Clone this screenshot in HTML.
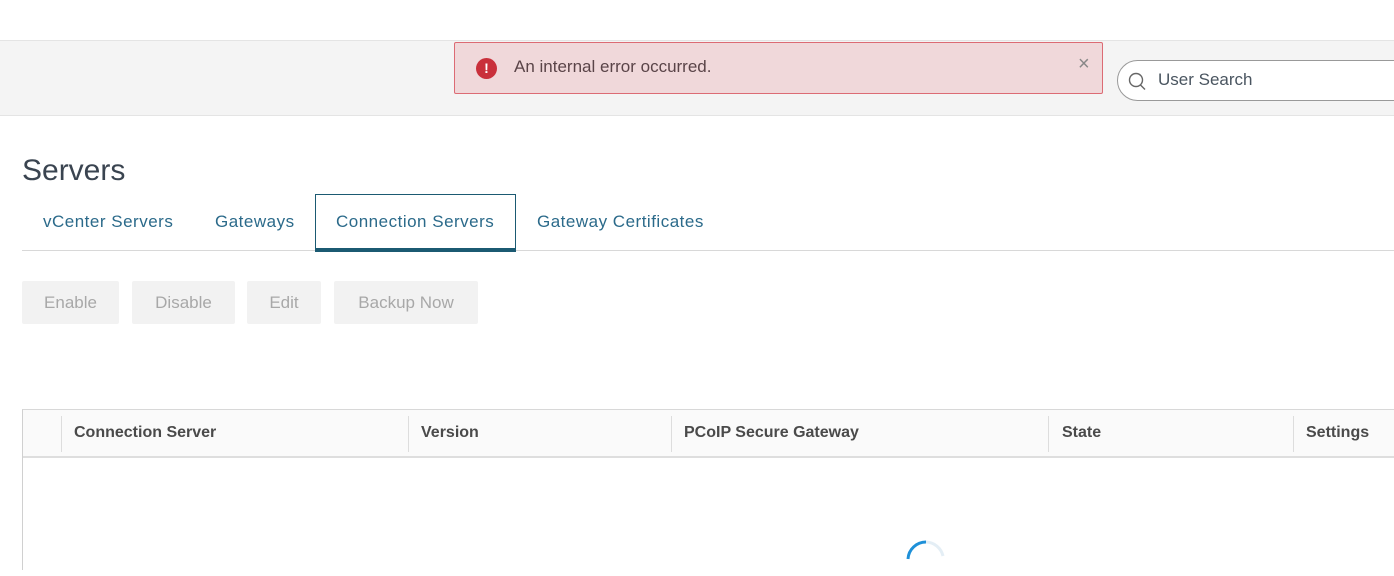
<!DOCTYPE html>
<html><head><meta charset="utf-8"><style>
*{margin:0;padding:0;box-sizing:border-box}
body{width:1394px;height:570px;overflow:hidden;background:#fff;font-family:"Liberation Sans",sans-serif;position:relative}
.a{position:absolute}
.tab{font-size:17px;color:#2b6a8a;letter-spacing:0.5px}
.th{font-size:16px;color:#4a4a4a;font-weight:bold;letter-spacing:0px}
</style></head><body>
<div class="a" style="left:0;top:40px;width:1394px;height:76px;background:#f4f4f4;border-top:1px solid #e4e4e4;border-bottom:1px solid #e4e4e4"></div>
<div class="a" style="left:454px;top:42px;width:649px;height:52px;background:#f0d8da;border:1px solid #dc6b74;border-radius:2px"></div>
<div class="a" style="left:476px;top:58px;width:21px;height:21px;border-radius:50%;background:#c9303b;color:#fff;font-size:14px;font-weight:bold;text-align:center;line-height:21px">!</div>
<div class="a" style="left:514px;top:57px;font-size:17px;color:#5a4448">An internal error occurred.</div>
<div class="a" style="left:1078px;top:53px;font-size:20px;color:#888">×</div>
<div class="a" style="left:1117px;top:60px;width:300px;height:41px;border:1px solid #999;border-radius:21px;background:#fff"></div>
<svg class="a" style="left:1127px;top:70px" width="22" height="22" viewBox="0 0 22 22"><circle cx="9" cy="10" r="6.5" fill="none" stroke="#666" stroke-width="1.4"/><line x1="13.5" y1="15" x2="18" y2="19.5" stroke="#666" stroke-width="1.4"/></svg>
<div class="a" style="left:1158px;top:70px;font-size:17px;color:#4a5560">User Search</div>

<div class="a" style="left:22px;top:154px;font-size:30px;color:#3a4450">Servers</div>

<div class="a" style="left:22px;top:250px;width:1372px;height:1px;background:#d8d8d8"></div>
<div class="a" style="left:315px;top:194px;width:201px;height:58px;border:1px solid #1b5a72;border-bottom:4px solid #1b5a72"></div>
<div class="a tab" style="left:43px;top:212px">vCenter Servers</div>
<div class="a tab" style="left:215px;top:212px">Gateways</div>
<div class="a tab" style="left:336px;top:212px">Connection Servers</div>
<div class="a tab" style="left:537px;top:212px">Gateway Certificates</div>

<div class="a" style="left:22px;top:281px;width:97px;height:43px;background:#f2f2f2;border-radius:2px;color:#a8a8a8;font-size:17px;text-align:center;line-height:43px">Enable</div>
<div class="a" style="left:132px;top:281px;width:103px;height:43px;background:#f2f2f2;border-radius:2px;color:#a8a8a8;font-size:17px;text-align:center;line-height:43px">Disable</div>
<div class="a" style="left:247px;top:281px;width:74px;height:43px;background:#f2f2f2;border-radius:2px;color:#a8a8a8;font-size:17px;text-align:center;line-height:43px">Edit</div>
<div class="a" style="left:334px;top:281px;width:144px;height:43px;background:#f2f2f2;border-radius:2px;color:#a8a8a8;font-size:17px;text-align:center;line-height:43px">Backup Now</div>

<div class="a" style="left:22px;top:409px;width:1372px;height:161px;border-left:1px solid #d0d0d0;border-top:1px solid #d8d8d8"></div>
<div class="a" style="left:23px;top:410px;width:1371px;height:48px;background:#fafafa;border-bottom:2px solid #dedede"></div>
<div class="a" style="left:61px;top:416px;width:1px;height:36px;background:#ddd"></div>
<div class="a" style="left:408px;top:416px;width:1px;height:36px;background:#ddd"></div>
<div class="a" style="left:671px;top:416px;width:1px;height:36px;background:#ddd"></div>
<div class="a" style="left:1048px;top:416px;width:1px;height:36px;background:#ddd"></div>
<div class="a" style="left:1293px;top:416px;width:1px;height:36px;background:#ddd"></div>
<div class="a th" style="left:74px;top:424px">Connection Server</div>
<div class="a th" style="left:421px;top:424px">Version</div>
<div class="a th" style="left:684px;top:424px">PCoIP Secure Gateway</div>
<div class="a th" style="left:1062px;top:424px">State</div>
<div class="a th" style="left:1306px;top:424px">Settings</div>

<svg class="a" style="left:900px;top:536px" width="50" height="40" viewBox="0 0 50 40"><path d="M8 23 A18 18 0 0 1 26 6" fill="none" stroke="#1e90d8" stroke-width="3"/><path d="M26 6 A18 18 0 0 1 43 20" fill="none" stroke="#e4eef5" stroke-width="3"/></svg>
</body></html>
